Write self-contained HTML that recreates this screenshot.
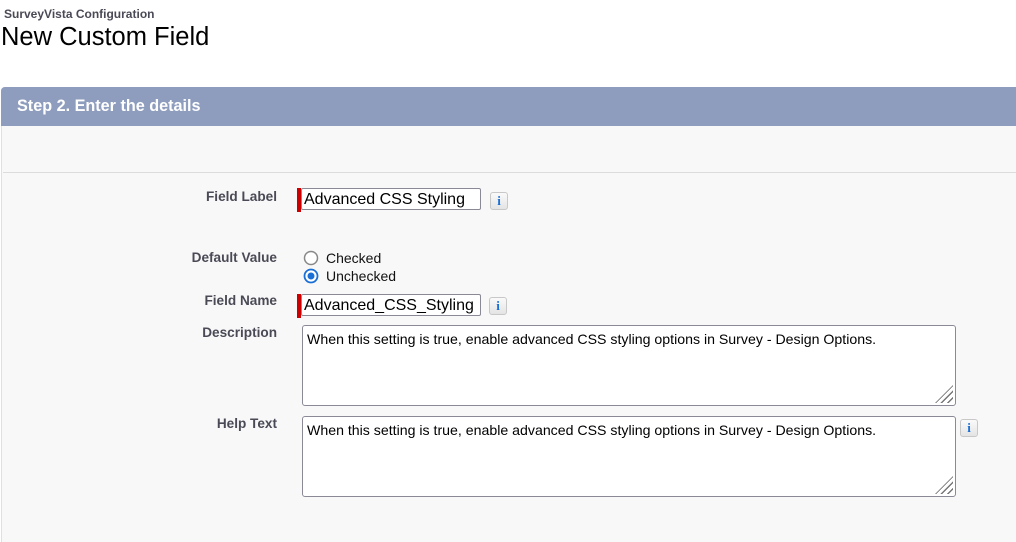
<!DOCTYPE html>
<html><head><style>
html,body{margin:0;width:1016px;height:542px;overflow:hidden}
body{background:#fff;font-family:"Liberation Sans",Arial,sans-serif;position:relative}
.a{position:absolute}
.lbl{position:absolute;right:739px;font-size:13.6px;font-weight:bold;color:#4a4a56;text-align:right;white-space:nowrap}
.inp{position:absolute;height:22px;border:1px solid #8a8a96;border-radius:2px;background:#fff;font-size:16px;line-height:22px;padding-left:2px;box-sizing:border-box;color:#000;white-space:nowrap;overflow:hidden}
.req{position:absolute;width:4px;height:24px;background:#c00}
.info{position:absolute;width:18px;height:18px;border:1px solid #c8c8c8;border-radius:3px;background:linear-gradient(#fafafa,#e4e4e4);box-sizing:border-box;color:#1a6fd6;font:bold 13px "Liberation Serif",serif;text-align:center;line-height:16px}
.ta{position:absolute;width:654px;height:81px;border:1px solid #8a8a96;border-radius:3px;background:#fff;box-sizing:border-box;font-size:14.15px;padding:5px 4px;color:#000;white-space:nowrap}
.grip{position:absolute;right:2px;bottom:2px;width:18px;height:18px;background:repeating-linear-gradient(135deg,transparent 0 3px,#777 3px 4.5px);clip-path:polygon(100% 0,100% 100%,0 100%)}
.rad{position:absolute;font-size:14px;color:#111}
</style></head><body>
<div class="a" style="left:4px;top:7px;font-size:12px;font-weight:bold;color:#4a4a56">SurveyVista Configuration</div>
<div class="a" style="left:1px;top:23px;font-size:25.5px;color:#000">New Custom Field</div>
<div class="a" style="left:1px;top:87px;width:1030px;height:470px;background:#f8f8f8;border-left:1px solid #e0e0e0;border-radius:4px 0 0 0"></div>
<div class="a" style="left:1px;top:87px;width:1030px;height:39px;background:#8e9dbe;border-radius:4px 0 0 0"></div>
<div class="a" style="left:17px;top:97px;font-size:16.2px;font-weight:bold;color:#fff">Step 2. Enter the details</div>
<div class="a" style="left:3px;top:172px;width:1020px;height:1px;background:#dcdcdc"></div>

<div class="lbl" style="top:189px">Field Label</div>
<div class="req" style="left:297px;top:188px"></div>
<div class="inp" style="left:301px;top:188px;width:180px">Advanced CSS Styling</div>
<div class="info" style="left:490px;top:192px">i</div>

<div class="lbl" style="top:250px">Default Value</div>
<svg class="a" style="left:303px;top:250px" width="16" height="34"><circle cx="8" cy="8" r="6.5" fill="#fff" stroke="#888" stroke-width="1.5"/><circle cx="8" cy="26" r="6.5" fill="#fff" stroke="#1a6fd6" stroke-width="1.8"/><circle cx="8" cy="26" r="3.5" fill="#1a6fd6"/></svg>
<div class="rad" style="left:326px;top:250px">Checked</div>
<div class="rad" style="left:326px;top:268px">Unchecked</div>

<div class="lbl" style="top:293px">Field Name</div>
<div class="req" style="left:297px;top:294px"></div>
<div class="inp" style="left:301px;top:294px;width:180px">Advanced_CSS_Styling</div>
<div class="info" style="left:489px;top:297px">i</div>

<div class="lbl" style="top:325px">Description</div>
<div class="ta" style="left:302px;top:325px">When this setting is true, enable advanced CSS styling options in Survey - Design Options.<div class="grip"></div></div>

<div class="lbl" style="top:416px">Help Text</div>
<div class="ta" style="left:302px;top:416px">When this setting is true, enable advanced CSS styling options in Survey - Design Options.<div class="grip"></div></div>
<div class="info" style="left:960px;top:419px">i</div>
</body></html>
